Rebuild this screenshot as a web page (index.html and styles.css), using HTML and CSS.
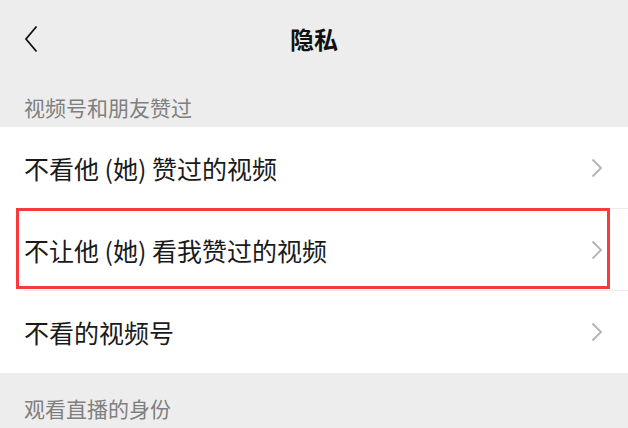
FILE: index.html
```html
<!DOCTYPE html>
<html lang="zh-CN">
<head>
  <meta charset="UTF-8">
  <meta name="viewport" content="width=device-width, initial-scale=1.0">
  <title>隐私</title>
  <link rel="stylesheet" href="styles.css">
</head>
<body>
  <div class="page">
    <div class="navbar">
      <div class="nav-back">
        <svg width="14" height="28" viewBox="0 0 14 28">
          <path d="M12.5 1.5 L2 14 L12.5 26.5" fill="none" stroke="#111" stroke-width="1.8"/>
        </svg>
      </div>
      <div class="nav-title">隐私</div>
      <div></div>
    </div>

    <div class="section-title">视频号和朋友赞过</div>
    <div class="list">
      <div class="cell">
        <span class="cell-text">不看他 (她) 赞过的视频</span>
        <svg class="arrow" width="12" height="20" viewBox="0 0 12 20">
          <path d="M1.5 1.5 L10 10 L1.5 18.5" fill="none" stroke="#b2b2b2" stroke-width="1.8"/>
        </svg>
      </div>
      <div class="cell cell-marked">
        <span class="cell-text">不让他 (她) 看我赞过的视频</span>
        <svg class="arrow" width="12" height="20" viewBox="0 0 12 20">
          <path d="M1.5 1.5 L10 10 L1.5 18.5" fill="none" stroke="#b2b2b2" stroke-width="1.8"/>
        </svg>
      </div>
      <div class="cell">
        <span class="cell-text">不看的视频号</span>
        <svg class="arrow" width="12" height="20" viewBox="0 0 12 20">
          <path d="M1.5 1.5 L10 10 L1.5 18.5" fill="none" stroke="#b2b2b2" stroke-width="1.8"/>
        </svg>
      </div>
    </div>

    <div class="section-title">观看直播的身份</div>
  </div>
</body>
</html>
```

FILE: styles.css
```css
body {
  margin: 0;
  background: #ededed;
  font-family: "Noto Sans CJK SC", "Noto Sans", sans-serif;
  color: #1a1a1a;
}

.page {
  width: 628px;
  height: 428px;
  overflow: hidden;
}

.navbar {
  height: 72px;
  box-sizing: border-box;
  padding-top: 6px;
  display: grid;
  grid-template-columns: 1fr auto 1fr;
  align-items: center;
}

.nav-back {
  padding-left: 24px;
  display: flex;
  align-items: center;
}

.nav-title {
  font-size: 24px;
  font-weight: bold;
  color: #111;
  line-height: 28px;
}

.section-title {
  padding: 25px 24px 9px;
  font-size: 21px;
  line-height: 21px;
  color: #7f7f7f;
}

.list {
  background: #fff;
}

.cell {
  position: relative;
  height: 82px;
  box-sizing: border-box;
  padding: 0 24px;
  display: flex;
  align-items: center;
  justify-content: space-between;
}

.cell + .cell::before {
  content: "";
  position: absolute;
  top: -1px;
  left: 24px;
  right: 0;
  height: 1px;
  background: #ececec;
}

.cell-text {
  font-size: 25px;
  line-height: 30px;
}

.arrow {
  margin-right: 1px;
}

.cell-marked::after {
  content: "";
  position: absolute;
  left: 16px;
  top: -1px;
  width: 594px;
  height: 81px;
  box-sizing: border-box;
  border: 3px solid #f83a3a;
}
```
